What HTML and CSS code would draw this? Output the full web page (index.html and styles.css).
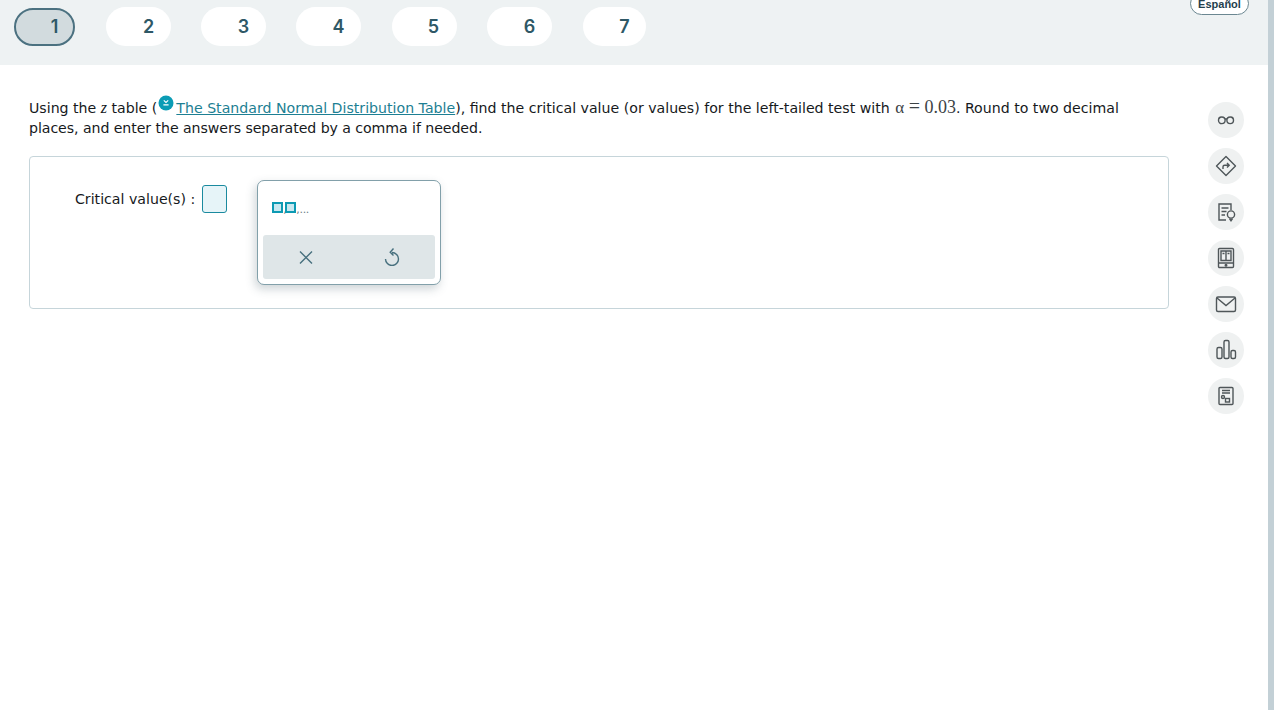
FILE: index.html
```html
<!DOCTYPE html>
<html lang="en">
<head>
<meta charset="utf-8">
<title>Critical value</title>
<link rel="stylesheet" href="styles.css">
</head>
<body>
<div class="page">
  <header class="topbar">
    <nav class="pills">
      <button class="pill pill-active">1</button>
      <button class="pill">2</button>
      <button class="pill">3</button>
      <button class="pill">4</button>
      <button class="pill pill-shift">5</button>
      <button class="pill">6</button>
      <button class="pill pill-last">7</button>
    </nav>
    <button class="lang">Español</button>
  </header>
  <div class="body">
    <main class="content">
      <p class="question">Using the <i class="var">z</i> table (<svg class="dl-icon" viewBox="0 0 16 16"><circle cx="8" cy="8" r="7.500" fill="#0b9cb5"/><path d="M5.800 5.400 8 7.400l2.200-2M5.400 9.800h5.200" fill="none" stroke="#fff" stroke-width="1.200"/></svg><a class="link" href="#">The Standard Normal Distribution Table</a>), find the critical value (or values) for the left-tailed test with <span class="math"><span class="alpha">α</span> <span class="eq">=</span> 0.03</span>. Round to two decimal <span class="tight">places, and enter the answers separated by a comma if needed.</span></p>
      <section class="card">
        <span class="label">Critical value(s) :</span>
        <span class="answer"></span>
        <div class="popup">
          <div class="template">
            <span class="tbox"></span><span class="tsep tsep-narrow">,</span><span class="tbox"></span><span class="tsep">,...</span>
          </div>
          <div class="actions">
            <svg class="act" viewBox="0 0 18 18"><path d="M3 3.500l12 12M15 3.500l-12 12"/></svg>
            <svg class="act" viewBox="0 0 18 18"><path d="M9 4.500A6.500 6.500 0 1 1 2.500 11M10.500 .5 7.200 4.300l3.300 3.200"/></svg>
          </div>
        </div>
      </section>
    </main>
    <aside class="tools">
      <button class="tool"><svg viewBox="0 0 24 24"><circle cx="7.800" cy="12.300" r="3.300"/><circle cx="16.200" cy="12.300" r="3.300"/><path d="M5 10.300 6.500 9M19 10.300 17.500 9M11 11h2"/></svg></button>
      <button class="tool"><svg viewBox="0 0 24 24"><path d="M12 2.500l9.500 9.500-9.500 9.500L2.500 12z" stroke-linejoin="round"/><path d="M9 15v-2.200c0-1 .8-1.600 1.700-1.600H15M13 9l2.200 2.200L13 13.400"/></svg></button>
      <button class="tool"><svg viewBox="0 0 24 24"><path d="M17 10V4H5v16h7"/><path d="M7.500 8h7M7.500 11.500h5M7.500 15h3.500"/><circle cx="17" cy="14.500" r="3.600"/><path d="M15.500 18.500l1.500 2.200 1.500-2.200"/></svg></button>
      <button class="tool"><svg viewBox="0 0 24 24"><rect x="4.500" y="2.500" width="15" height="19" rx="1"/><path d="M4.500 17h15M7 5h10v9.500H7zM12 5v9.500M8.500 7.500h2M13.500 7.500h2"/><circle cx="12" cy="19.200" r=".8"/></svg></button>
      <button class="tool"><svg viewBox="0 0 24 24"><rect x="2.500" y="5" width="19" height="14.500" rx="1.500"/><path d="M3 6 12 13.500 21 6"/></svg></button>
      <button class="tool"><svg viewBox="0 0 24 24"><rect x="3" y="9.500" width="5" height="11" rx="1.500"/><rect x="10" y="2.500" width="5" height="18" rx="1.500"/><rect x="17" y="12.500" width="4.500" height="8" rx="1.500"/></svg></button>
      <button class="tool"><svg viewBox="0 0 24 24"><path d="M6 3.500h12a1 1 0 0 1 1 1v15a1 1 0 0 1-1 1H6a1 1 0 0 1-1-1v-15a1 1 0 0 1 1-1z"/><path d="M8 6.500h8M8 9h8"/><circle cx="9" cy="13" r="1.500"/><rect x="11.500" y="14.500" width="4" height="3.500"/></svg></button>
    </aside>
  </div>
</div>
<div class="scrollbar"></div>
</body>
</html>
```
FILE: styles.css
```css
* { box-sizing: border-box; }
html, body { margin: 0; height: 100%; overflow: hidden; }
body { display: flex; background: #fff; font-family: "DejaVu Sans", Verdana, sans-serif; color: #16191c; }
.page { flex: 1; min-width: 0; display: flex; flex-direction: column; }
.scrollbar { width: 6px; background: #c3d0d6; }

.topbar { height: 65px; background: #eef2f3; display: flex; justify-content: space-between; align-items: flex-start; padding: 0 19px 0 14px; }
.pills { display: flex; gap: 30px; padding-top: 7px; }
.pill { width: 65px; height: 39px; border: 0; border-radius: 20px; background: #fff; padding: 0 0 0 20px; font: 600 18px/39px Inter, Lato, sans-serif; color: #2e5866; }
.pill-active { width: 61px; height: 38px; margin-top: 1px; margin-right: 1px; background: #d2dbde; border: 2px solid #4b7180; padding-left: 20px; line-height: 34px; }
.pill-shift { margin-left: 1px; padding-left: 18px; }
.pill-last { width: 63px; margin-left: 1px; }
.lang { margin-top: -8px; width: 59px; height: 23px; padding: 0; border: 1px solid #6b8791; border-radius: 12px; background: #fff; font: 700 11px/14px "Liberation Sans", Arial, sans-serif; color: #24404d; }

.body { flex: 1; display: flex; padding: 30px 24px 0 29px; }
.content { width: 1140px; }
.question { margin: 0; font-size: 14.150px; line-height: 20px; }
.var { font-family: "Liberation Serif", serif; font-size: 16px; line-height: 0; }
.dl-icon { width: 16px; height: 16px; vertical-align: 2px; margin: 0 2px 0 1px; }
.link { color: #1d7f93; text-decoration: underline; }
.math { font-family: "Liberation Serif", serif; font-size: 18px; line-height: 0; color: #3c4245; margin: 0 0 0 1px; }
.alpha { font-size: 17px; }
.eq { font-size: 20px; }
.tight { letter-spacing: -.065px; }

.card { margin-top: 18px; height: 153px; border: 1px solid #c6d5da; border-radius: 4px; display: flex; align-items: flex-start; padding: 23px 0 0 45px; }
.label { font-size: 14.150px; line-height: 38px; }
.answer { width: 25px; height: 28px; margin: 5px 0 0 7px; background: #e6f4f8; border: 1px solid #1a8a9f; border-radius: 3px; }
.popup { width: 184px; height: 105px; margin: 0 0 0 30px; background: #fff; border: 1px solid #82a0aa; border-radius: 7px; box-shadow: -2px 4px 10px rgba(60, 85, 95, .25); padding: 5px; display: flex; flex-direction: column; justify-content: flex-end; }
.template { flex: 1; display: flex; align-items: center; padding: 0 0 6px 9px; }
.tbox { width: 11px; height: 11px; background: #c9e8f0; border: 2px solid #0d9ab3; }
.tsep { font-size: 11px; line-height: 12px; color: #6f8087; margin-top: 5px; letter-spacing: -.3px; }
.tsep-narrow { width: 2px; }
.actions { height: 44px; background: #dfe6e8; border-radius: 3px; display: flex; justify-content: space-between; align-items: center; padding: 0 34px; }
.act { width: 18px; height: 18px; fill: none; stroke: #47707e; stroke-width: 1.400; }

.tools { display: flex; flex-direction: column; gap: 10px; margin-left: 39px; padding-top: 7px; }
.tool { width: 36px; height: 36px; border: 0; border-radius: 50%; background: #eff1f1; padding: 6px; display: flex; }
.tool svg { width: 24px; height: 24px; fill: none; stroke: #4f5659; stroke-width: 1.400; }
```
